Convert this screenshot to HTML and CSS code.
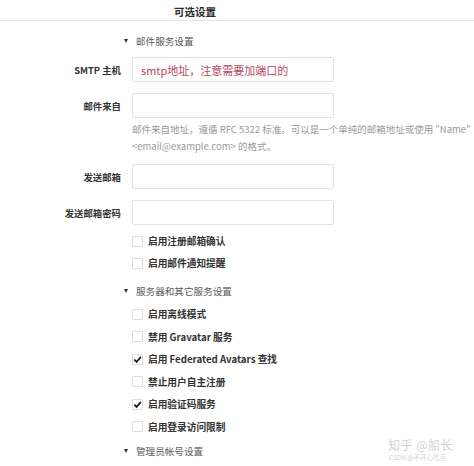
FILE: index.html
```html
<!DOCTYPE html>
<html lang="zh-CN">
<head>
<meta charset="utf-8">
<title>可选设置</title>
<link rel="stylesheet" href="styles.css">
</head>
<body>
<div class="page">
  <header class="header"><h1 class="title">可选设置</h1></header>

  <div class="section-title"><span class="caret"></span>邮件服务设置</div>

  <div class="field f-smtp">
    <label class="label">SMTP 主机</label>
    <div class="input"><span class="value">smtp地址，注意需要加端口的</span></div>
  </div>

  <div class="field f-from">
    <label class="label">邮件来自</label>
    <div class="input"></div>
  </div>
  <p class="help">邮件来自地址，遵循 RFC 5322 标准。可以是一个单纯的邮箱地址或使用 "Name" &lt;email@example.com&gt; 的格式。</p>

  <div class="field f-user">
    <label class="label">发送邮箱</label>
    <div class="input"></div>
  </div>

  <div class="field f-pass">
    <label class="label">发送邮箱密码</label>
    <div class="input"></div>
  </div>

  <div class="checks first">
    <div class="check"><span class="box"></span>启用注册邮箱确认</div>
    <div class="check"><span class="box"></span>启用邮件通知提醒</div>
  </div>

  <div class="section-title s2"><span class="caret"></span>服务器和其它服务设置</div>

  <div class="checks second">
    <div class="check"><span class="box"></span>启用离线模式</div>
    <div class="check"><span class="box"></span>禁用 Gravatar 服务</div>
    <div class="check"><span class="box on"><svg viewBox="0 0 11 11" width="11" height="11"><path d="M2.3 5.6 L4.6 7.9 L8.9 2.9" fill="none" stroke="#1a1a1a" stroke-width="1.7"/></svg></span>启用 Federated Avatars 查找</div>
    <div class="check"><span class="box"></span>禁止用户自主注册</div>
    <div class="check"><span class="box on"><svg viewBox="0 0 11 11" width="11" height="11"><path d="M2.3 5.6 L4.6 7.9 L8.9 2.9" fill="none" stroke="#1a1a1a" stroke-width="1.7"/></svg></span>启用验证码服务</div>
    <div class="check"><span class="box"></span>启用登录访问限制</div>
  </div>

  <div class="section-title s3"><span class="caret"></span>管理员帐号设置</div>

  <div class="watermark">
    <div class="wm-main">知乎 @船长</div>
    <div class="wm-sub">CSDN @不开心吃点</div>
  </div>
</div>
</body>
</html>
```

FILE: styles.css
```css
* { box-sizing: border-box; }

html, body {
  margin: 0;
  padding: 0;
  background: #ffffff;
}

body {
  font-family: "Noto Sans CJK SC", "Noto Sans", sans-serif;
  color: #333333;
  width: 474px;
  height: 466px;
  overflow: hidden;
}

.page {
  position: relative;
  height: 466px;
}

.header {
  height: 21px;
  border-bottom: 1px solid #e6e6e6;
}

.title {
  margin: 0;
  width: 390px;
  padding-top: 4px;
  text-align: center;
  font-size: 10.5px;
  line-height: 15px;
  font-weight: 700;
  color: #2b2b2b;
}

.section-title {
  display: flex;
  align-items: center;
  height: 16px;
  margin-top: 12px;
  padding-left: 124px;
  font-size: 9.6px;
  color: #5a5a5a;
}

.caret {
  width: 0;
  height: 0;
  border-left: 2.5px solid transparent;
  border-right: 2.5px solid transparent;
  border-top: 4px solid #333;
  margin-right: 8px;
}

.section-title.s2 { margin-top: 9px; }
.section-title.s3 { margin-top: 5px; }

.field {
  display: grid;
  grid-template-columns: 121px 202px;
  column-gap: 11px;
  align-items: center;
  height: 25px;
}

.f-smtp { margin-top: 8px; }
.f-from { margin-top: 11px; }
.f-user { margin-top: 9px; }
.f-pass { margin-top: 11px; }

.label {
  text-align: right;
  font-size: 9.4px;
  font-weight: 700;
  color: #333;
}

.input {
  height: 25px;
  border: 1px solid #e3e3e3;
  border-radius: 2px;
  display: flex;
  align-items: center;
  padding-left: 8px;
  background: #fff;
}

.value {
  font-size: 11px;
  color: #b5475c;
  white-space: nowrap;
}

.help {
  margin: 3px 0 0 132px;
  width: 342px;
  font-size: 9.5px;
  line-height: 17px;
  color: #9a9a9a;
}

.checks {
  padding-left: 132px;
}

.checks.first { margin-top: 5px; }
.checks.first .check { height: 22px; }
.checks.second { margin-top: 4px; }
.checks.second .check { height: 22.5px; }

.check {
  display: flex;
  align-items: center;
  font-size: 9.7px;
  font-weight: 600;
  color: #333;
}

.box {
  width: 11px;
  height: 11px;
  border: 1px solid #dcdcdc;
  border-radius: 1px;
  margin-right: 5px;
  position: relative;
  flex: none;
}

.box svg {
  position: absolute;
  left: -1px;
  top: -1px;
}

.watermark {
  position: absolute;
  left: 388px;
  top: 436px;
  color: #d2d2d2;
  text-align: left;
}

.wm-main {
  font-size: 12px;
  line-height: 18px;
  letter-spacing: 0.5px;
}

.wm-sub {
  font-size: 6.5px;
  line-height: 9px;
  margin-top: -1px;
  margin-left: 1px;
}
```
